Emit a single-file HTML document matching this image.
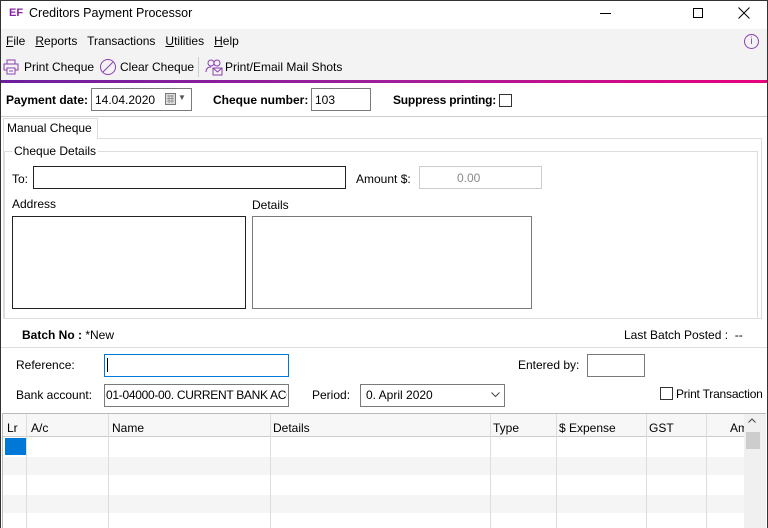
<!DOCTYPE html>
<html><head><style>
*{box-sizing:border-box;margin:0;padding:0}
body{width:768px;height:528px;overflow:hidden;background:#fff;font-family:"Liberation Sans",sans-serif;font-size:12px;color:#000;position:relative}
.a{position:absolute;white-space:nowrap}
.in{position:absolute;border:1px solid #7a7a7a;background:#fff}
.b{font-weight:bold}
u{text-decoration:underline}
</style></head><body>
<div class="a" style="left:0;top:0;width:768px;height:528px;border-left:1px solid #333;border-right:1px solid #333;border-top:1px solid #333"></div>
<!-- title -->
<div class="a b" style="left:9px;top:7px;color:#8b1fa8;font-size:11px">EF</div>
<div class="a" style="left:29px;top:6px;font-size:12.5px">Creditors Payment Processor</div>
<div class="a" style="left:600px;top:13px;width:11px;height:1px;background:#000"></div>
<div class="a" style="left:693px;top:8px;width:10px;height:10px;border:1px solid #000"></div>
<svg class="a" style="left:738px;top:7px" width="12" height="12"><path d="M0.5 0.5L11.5 11.5M11.5 0.5L0.5 11.5" stroke="#000" stroke-width="1"/></svg>
<!-- menu/toolbar -->
<div class="a" style="left:1px;top:29px;width:766px;height:51px;background:#f3f3f3"></div>
<div class="a" style="left:6px;top:34px"><u>F</u>ile&nbsp;&nbsp; <u>R</u>eports&nbsp;&nbsp; Transactions&nbsp;&nbsp; <u>U</u>tilities&nbsp;&nbsp; <u>H</u>elp</div>
<div class="a" style="left:744px;top:34px;width:15px;height:15px;border:1px solid #8b3fb0;border-radius:50%;color:#8b3fb0;font-size:10px;text-align:center;line-height:13px">i</div>
<svg class="a" style="left:3px;top:59px" width="16" height="16"><rect x="4" y="1" width="8" height="4" fill="none" stroke="#8b3fb0"/><rect x="1" y="5" width="14" height="6" fill="none" stroke="#8b3fb0"/><rect x="4" y="9" width="8" height="6" fill="#fff" stroke="#8b3fb0"/><line x1="6" y1="12" x2="10" y2="12" stroke="#8b3fb0"/></svg>
<div class="a" style="left:24px;top:60px">Print Cheque</div>
<svg class="a" style="left:99px;top:58px" width="18" height="18"><circle cx="9" cy="9" r="7.5" fill="none" stroke="#8b3fb0"/><line x1="4" y1="14" x2="14" y2="4" stroke="#8b3fb0"/></svg>
<div class="a" style="left:120px;top:60px">Clear Cheque</div>
<div class="a" style="left:198px;top:57px;width:1px;height:20px;background:#ccc"></div>
<svg class="a" style="left:205px;top:58px" width="18" height="18"><circle cx="6" cy="5" r="3" fill="none" stroke="#8b3fb0"/><circle cx="12" cy="5" r="3" fill="none" stroke="#8b3fb0"/><path d="M1 14 Q1 9 6 9 M8 10 h9 v7 h-9z M8 10 l4.5 4 l4.5 -4" fill="none" stroke="#8b3fb0"/></svg>
<div class="a" style="left:225px;top:60px">Print/Email Mail Shots</div>
<div class="a" style="left:1px;top:80px;width:766px;height:3px;background:linear-gradient(90deg,#6c1f9e,#a01e9a 50%,#e8007c)"></div>
<!-- header row -->
<div class="a b" style="left:6px;top:93px">Payment date:</div>
<div class="in" style="left:91px;top:88px;width:101px;height:23px"></div>
<div class="a" style="left:95px;top:93px">14.04.2020</div>
<svg class="a" style="left:165px;top:93px" width="11" height="12"><rect x="0.5" y="0.5" width="10" height="11" fill="#ddd" stroke="#777"/><path d="M2 3h7M2 5.5h7M2 8h7M4 2v8M7 2v8" stroke="#888" stroke-width="0.8"/></svg>
<div class="a" style="left:178px;top:93px;font-size:8px;color:#555">▼</div>
<div class="a b" style="left:213px;top:93px">Cheque number:</div>
<div class="in" style="left:311px;top:88px;width:60px;height:23px"></div>
<div class="a" style="left:315px;top:93px">103</div>
<div class="a b" style="left:393px;top:93px;letter-spacing:-0.2px">Suppress printing:</div>
<div class="a" style="left:499px;top:94px;width:13px;height:13px;border:1px solid #333;background:#fff"></div>
<div class="a" style="left:1px;top:116px;width:766px;height:1px;background:#ccc"></div>
<!-- tab -->
<div class="a" style="left:3px;top:118px;width:95px;height:21px;border:1px solid #ddd;border-bottom:none;background:#fff"></div>
<div class="a" style="left:7px;top:121px">Manual Cheque</div>
<div class="a" style="left:3px;top:138px;width:759px;height:181px;border:1px solid #ddd;border-top:none"></div>
<div class="a" style="left:98px;top:138px;width:664px;height:1px;background:#ddd"></div>
<div class="a" style="left:4px;top:151px;width:754px;height:167px;border:1px solid #ddd;border-bottom:none"></div>
<div class="a" style="left:12px;top:144px;background:#fff;padding:0 2px">Cheque Details</div>
<div class="a" style="left:12px;top:172px">To:</div>
<div class="in" style="left:33px;top:166px;width:313px;height:23px;border-color:#222"></div>
<div class="a" style="left:356px;top:172px">Amount $:</div>
<div class="in" style="left:419px;top:166px;width:123px;height:23px;border-color:#ccc"></div>
<div class="a" style="left:457px;top:171px;color:#888">0.00</div>
<div class="a" style="left:12px;top:197px">Address</div>
<div class="a" style="left:252px;top:198px">Details</div>
<div class="in" style="left:12px;top:216px;width:234px;height:93px;border-color:#222"></div>
<div class="in" style="left:252px;top:216px;width:280px;height:93px"></div>
<!-- batch -->
<div class="a" style="left:22px;top:328px"><b>Batch No :</b> *New</div>
<div class="a" style="left:624px;top:328px">Last Batch Posted :&nbsp; --</div>
<div class="a" style="left:1px;top:347px;width:766px;height:1px;background:#ddd"></div>
<div class="a" style="left:16px;top:358px">Reference:</div>
<div class="in" style="left:104px;top:354px;width:185px;height:23px;border-color:#0078d7"></div>
<div class="a" style="left:107px;top:358px;width:1px;height:14px;background:#000"></div>
<div class="a" style="left:518px;top:358px">Entered by:</div>
<div class="in" style="left:587px;top:354px;width:58px;height:23px"></div>
<div class="a" style="left:16px;top:388px">Bank account:</div>
<div class="in" style="left:104px;top:384px;width:185px;height:23px"></div>
<div class="a" style="left:106px;top:388px;width:181px;overflow:hidden;letter-spacing:-0.3px">01-04000-00. CURRENT BANK ACC</div>
<div class="a" style="left:312px;top:388px">Period:</div>
<div class="in" style="left:360px;top:384px;width:145px;height:23px"></div>
<div class="a" style="left:366px;top:388px">0. April 2020</div>
<svg class="a" style="left:491px;top:392px" width="9" height="6"><path d="M0.5 0.5L4.5 4.5L8.5 0.5" fill="none" stroke="#444"/></svg>
<div class="a" style="left:660px;top:387px;width:13px;height:13px;border:1px solid #333"></div>
<div class="a" style="left:676px;top:387px;letter-spacing:-0.2px">Print Transaction</div>
<!-- grid -->
<div class="a" style="left:2px;top:413px;width:764px;height:115px;border:1px solid #bbb;border-bottom:none;background:#fff"></div>
<div class="a" style="left:3px;top:414px;width:741px;height:23px;background:#f7f7f7;border-bottom:1px solid #ccc"></div>
<div class="a" style="left:3px;top:457px;width:741px;height:18px;background:#f5f5f5"></div>
<div class="a" style="left:3px;top:495px;width:741px;height:18px;background:#f5f5f5"></div>
<div class="a" style="left:5px;top:438px;width:21px;height:17px;background:#0078d7"></div>
<div class="a" style="left:26px;top:414px;width:1px;height:114px;background:#ddd"></div>
<div class="a" style="left:108px;top:414px;width:1px;height:114px;background:#ddd"></div>
<div class="a" style="left:270px;top:414px;width:1px;height:114px;background:#ddd"></div>
<div class="a" style="left:490px;top:414px;width:1px;height:114px;background:#ddd"></div>
<div class="a" style="left:556px;top:414px;width:1px;height:114px;background:#ddd"></div>
<div class="a" style="left:646px;top:414px;width:1px;height:114px;background:#ddd"></div>
<div class="a" style="left:706px;top:414px;width:1px;height:114px;background:#ddd"></div>
<div class="a" style="left:7px;top:421px">Lr</div>
<div class="a" style="left:31px;top:421px">A/c</div>
<div class="a" style="left:112px;top:421px">Name</div>
<div class="a" style="left:273px;top:421px">Details</div>
<div class="a" style="left:493px;top:421px">Type</div>
<div class="a" style="left:559px;top:421px">$ Expense</div>
<div class="a" style="left:649px;top:421px">GST</div>
<div class="a" style="left:730px;top:421px;width:14px;overflow:hidden">Am</div>
<div class="a" style="left:744px;top:414px;width:22px;height:114px;background:#f0f0f0"></div>
<svg class="a" style="left:748px;top:418px" width="8" height="5"><path d="M0.5 4.5L4 1L7.5 4.5" fill="none" stroke="#444"/></svg>
<div class="a" style="left:746px;top:432px;width:14px;height:17px;background:#cdcdcd"></div>
</body></html>
